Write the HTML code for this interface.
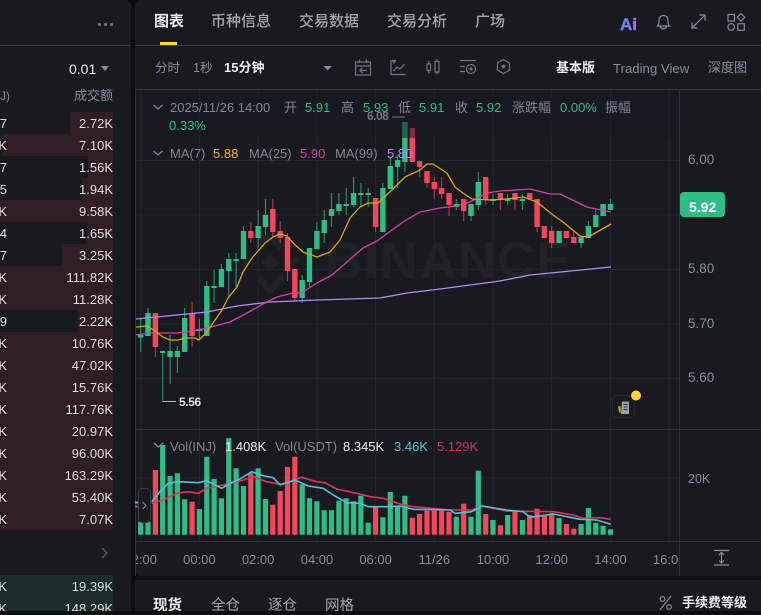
<!DOCTYPE html>
<html><head><meta charset="utf-8">
<style>
html,body{margin:0;padding:0;background:#0b0e11}
body{width:761px;height:611px;overflow:hidden;position:relative;font-family:"Liberation Sans","Noto Sans CJK SC",sans-serif}
.p{position:absolute;background:#181a20;overflow:hidden}
.t{position:absolute;white-space:nowrap;line-height:16px;height:16px}
.g{color:#2ebd85}.d{color:#848e9c}.w{color:#eaecef}
.tab{font-size:15px;color:#a3a8b0;top:13px;font-weight:500;line-height:18px;height:18px}
.l{font-size:13px;color:#7f8793;top:100px}
.m{font-size:13px;color:#7f8793;top:146px}
.v{font-size:13px;color:#7f8793;top:439px}
.ax{font-size:13.500px;color:#848e9c;left:688px}
.x{font-size:13px;color:#848e9c;top:552px;width:50px;text-align:center}
.r{position:absolute;left:0;width:113px;height:22px}
.n{position:absolute;right:18px;font-size:13px;line-height:22px;margin-top:1px;color:#dcdee1;white-space:nowrap}
.c{position:absolute;left:-10px;width:17px;text-align:right;font-size:13px;line-height:22px;margin-top:1px;color:#dcdee1}
</style></head><body>

<!-- left panel -->
<div class="p" style="left:0;top:0;width:131px;height:611px">
<div style="position:absolute;left:0;top:45px;width:131px;height:1px;background:#333b47"></div>
<div style="position:absolute;left:98px;top:23px;width:2.500px;height:2.500px;border-radius:50%;background:#6b7280;box-shadow:6px 0 #6b7280,12px 0 #6b7280"></div>
<span class="t w" style="left:69px;top:61px;font-size:14px">0.01</span>
<div style="position:absolute;left:101px;top:66px;border-left:4px solid transparent;border-right:4px solid transparent;border-top:5px solid #848e9c"></div>
<span class="t d" style="left:0;top:88px;font-size:12px">J)</span>
<span class="t d" style="left:74px;top:88px;font-size:13px">成交额</span>

<div class="r" style="top:112px;left:70px;width:43px;background:#2f1e26"></div>
<div class="r" style="top:134px;left:3px;width:110px;background:#2f1e26"></div>
<div class="r" style="top:156px;left:88px;width:25px;background:#2f1e26"></div>
<div class="r" style="top:178px;left:82px;width:31px;background:#2f1e26"></div>
<div class="r" style="top:200px;width:113px;background:#2f1e26"></div>
<div class="r" style="top:222px;left:87px;width:26px;background:#2f1e26"></div>
<div class="r" style="top:244px;left:62px;width:51px;background:#2f1e26"></div>
<div class="r" style="top:266px;height:44px;background:#2f1e26"></div>
<div class="r" style="top:310px;left:78px;width:35px;background:#2f1e26"></div>
<div class="r" style="top:332px;height:198px;background:#2f1e26"></div>
<div class="r" style="top:575px;height:36px;background:#1c2b2b"></div>

<span class="c" style="top:112px">7</span><span class="n" style="top:112px">2.72K</span>
<span class="c" style="top:134px">K</span><span class="n" style="top:134px">7.10K</span>
<span class="c" style="top:156px">7</span><span class="n" style="top:156px">1.56K</span>
<span class="c" style="top:178px">5</span><span class="n" style="top:178px">1.94K</span>
<span class="c" style="top:200px">K</span><span class="n" style="top:200px">9.58K</span>
<span class="c" style="top:222px">4</span><span class="n" style="top:222px">1.65K</span>
<span class="c" style="top:244px">7</span><span class="n" style="top:244px">3.25K</span>
<span class="c" style="top:266px">K</span><span class="n" style="top:266px">111.82K</span>
<span class="c" style="top:288px">K</span><span class="n" style="top:288px">11.28K</span>
<span class="c" style="top:310px">9</span><span class="n" style="top:310px">2.22K</span>
<span class="c" style="top:332px">K</span><span class="n" style="top:332px">10.76K</span>
<span class="c" style="top:354px">K</span><span class="n" style="top:354px">47.02K</span>
<span class="c" style="top:376px">K</span><span class="n" style="top:376px">15.76K</span>
<span class="c" style="top:398px">K</span><span class="n" style="top:398px">117.76K</span>
<span class="c" style="top:420px">K</span><span class="n" style="top:420px">20.97K</span>
<span class="c" style="top:442px">K</span><span class="n" style="top:442px">96.00K</span>
<span class="c" style="top:464px">K</span><span class="n" style="top:464px">163.29K</span>
<span class="c" style="top:486px">K</span><span class="n" style="top:486px">53.40K</span>
<span class="c" style="top:508px">K</span><span class="n" style="top:508px">7.07K</span>
<svg style="position:absolute;left:100px;top:546px" width="10" height="14" viewBox="0 0 10 14"><path d="M2 2l5 5-5 5" fill="none" stroke="#5e6673" stroke-width="1.200"/></svg>
<span class="c" style="top:575px">K</span><span class="n" style="top:575px">19.39K</span>
<span class="c" style="top:597px">K</span><span class="n" style="top:597px">148.29K</span>
</div>

<!-- chart panel -->
<div class="p" style="left:135px;top:0;width:626px;height:576px;border-bottom-left-radius:6px"></div>
<div class="p" style="left:135px;top:580px;width:626px;height:31px"></div>
<div style="position:absolute;left:127px;top:0;border-left:6px solid transparent;border-right:6px solid transparent;border-top:5px solid #0b0e11"></div>

<span class="t tab w" style="left:154px;color:#eaecef;font-weight:700">图表</span>
<span class="t tab" style="left:211px">币种信息</span>
<span class="t tab" style="left:299px">交易数据</span>
<span class="t tab" style="left:387px">交易分析</span>
<span class="t tab" style="left:475px">广场</span>
<div style="position:absolute;left:160px;top:42px;width:17px;height:3px;background:#fcd535"></div>

<svg style="position:absolute;left:0;top:0" width="761" height="611">
<defs><linearGradient id="ai" x1="0" x2="1" y1="0" y2="0"><stop offset="0" stop-color="#4f8fff"/><stop offset=".6" stop-color="#7d7cf8"/><stop offset="1" stop-color="#b96fe0"/></linearGradient></defs>
<path d="M135 45.500H761M135 89.500H761" stroke="#333b47" fill="none"/>
<text x="620" y="30" font-family="Liberation Sans" font-weight="700" font-size="17" fill="url(#ai)" stroke="url(#ai)" stroke-width=".4">Ai</text>
<g fill="none" stroke="#848e9c" stroke-width="1.200">
<path d="M658 26c1.500-1.500 1.500-3 1.500-6a4.500 4.500 0 0 1 9 0c0 3 0 4.500 1.500 6zM661 26.500c.5 3 5.500 3 6 0" transform="translate(-.5 0)"/>
<path d="M692 28l13-13M699.500 15h5.500v5.500M692 22.500V28h5.500"/>
<rect x="728" y="14.500" width="6.500" height="6.500"/><path d="M741 13.500l3.800 3.800-3.800 3.800-3.800-3.800z"/><circle cx="731.200" cy="27" r="3.300"/><rect x="737.800" y="23.800" width="6.500" height="6.500"/>
</g>
<g fill="none" stroke="#6f7682" stroke-width="1.200">
<rect x="355.500" y="62" width="15" height="13"/><path d="M355.500 66H370.500M359.500 59.500v3.500M366.500 59.500v3.500M367 70.500h-7M362.500 68l-2.700 2.500 2.700 2.500"/>
<path d="M391 60v14.500h14.500M393.500 71l3.500-4 3 2 4.500-5"/><path d="M392.500 60.500h3l-1.500 2.500z" fill="#6f7682"/>
<rect x="427" y="64" width="3.500" height="6.500"/><rect x="435" y="61.500" width="4" height="10.500"/><path d="M428.800 61v3M428.800 70.500v3M437 59v2.500M437 72v2.500"/>
<path d="M460 60.500h16M460 66.500h5M460 71.500h5"/><circle cx="471" cy="69" r="4.500"/><circle cx="471" cy="69" r="1" fill="#6f7682"/>
<path d="M503.500 59.500l6 3.500v7l-6 3.500-6-3.500v-7z"/><circle cx="503.500" cy="66.500" r="1.300" fill="#6f7682"/>
</g>
<path d="M323.500 66h8.500l-4.250 4.500z" fill="#848e9c"/>

<!-- grid -->
<g stroke="#21262d" fill="none">
<path d="M140.700 90V541M199.400 90V541M258.100 90V541M316.900 90V541M375.600 90V541M434.300 90V541M493 90V541M551.700 90V541M610.500 90V541M669.200 90V541"/>
<path d="M135 160.500H679M135 215H679M135 269.500H679M135 324H679M135 378.500H679M135 478H679"/>
</g>
<path d="M135 429.500H761M135 541.500H761M679.500 90V576M135.500 90V576" stroke="#2b3139" fill="none"/>

<!-- watermark -->
<g fill="none" stroke="#1f2227" stroke-width="7"><path d="M270 236l12 12M258 248l12-12M282 278l-12 12-12-12M244 263l4-4M296 263l-4-4"/></g>
<path d="M270 254l9 9-9 9-9-9z" fill="#1f2227"/>
<text x="325" y="278" font-family="Liberation Sans" font-weight="700" font-size="52" letter-spacing="1.500" fill="#1f2227">BINANCE</text>

<!-- wicks -->
<path stroke="#2ebd85" stroke-opacity=".75" stroke-width="1.100" fill="none" d="M140.700 319V352M148 308V336M162.700 351V402M170.100 335V384M177.400 346V373M184.700 308V352M199.400 319V340M206.800 281V336M214.100 270V303M221.400 264V287M228.800 253V297M236.100 253V287M243.500 226V259M258.100 210V248M265.500 199V235M302.200 275V303M309.500 248V287M316.900 222V249M324.200 210V243M331.500 193V227M338.900 193V215M346.200 188V215M353.600 177V207M360.900 183V207M368.200 188V207M382.900 183V232M390.300 158V189M397.600 155V188M404.900 122V172M456.300 199V210M471 204V221M478.300 172V210M493 194V205M507.700 194V205M522.400 194V210M559.100 231V243M581.100 237V248M588.400 221V238M595.800 210V227M603.100 204V216M610.500 199V210"/>
<path stroke="#f6465d" stroke-opacity=".7" stroke-width="1.100" fill="none" d="M155.400 313V357M192.100 302V347M250.800 222V243M272.800 199V237M280.200 221V243M287.500 233V281M294.800 269V302M375.600 198V232M412.300 128V162M419.600 161V177M427 171V188M434.300 177V199M441.600 177V199M449 193V216M463.700 199V221M485.700 177V205M500.400 193V210M515 193V210M529.700 193V199M537.100 199V232M544.400 226V238M551.700 226V248M566.400 231V238M573.800 231V243"/>
<!-- bodies -->
<path stroke="#2ebd85" stroke-width="5.400" fill="none" d="M140.700 335V337.500M148 313V336M162.700 351V353M170.100 351V357M177.400 351V357M184.700 318V352M199.400 329V331M206.800 286V336M214.100 286V288M221.400 269V287M228.800 259V271M236.100 259V261M243.500 231V259M258.100 226V238M265.500 215V227M302.200 280V298M309.500 248V282M316.900 231V249M324.200 220V233M331.500 209V216M338.900 204V211M346.200 204V206M353.600 193V205M360.900 193V195M368.200 193V195M382.900 188V232M390.300 166V189M397.600 160V167M404.900 122V162M456.300 204V207M471 204V216M478.300 182V205M493 199V201M507.700 199V201M522.400 199V201M559.100 231V243M581.100 237V243M588.400 226V238M595.800 215V227M603.100 204V216M610.500 204V210"/>
<path stroke="#f6465d" stroke-width="5.400" fill="none" d="M155.400 313V347M192.100 313V336M250.800 231V238M272.800 209V232M280.200 231V238M287.500 237V271M294.800 269V298M375.600 198V227M412.300 128V162M419.600 161V167M427 171V183M434.300 182V189M441.600 188V194M449 193V205M463.700 199V211M485.700 177V200M500.400 193V200M515 193V200M529.700 193V199M537.100 199V227M544.400 226V238M551.700 231V243M566.400 231V238M573.800 237V243"/>

<!-- MA lines -->
<polyline fill="none" stroke="#b58cf0" stroke-width="1.300" points="136,319 207,312 237,306 270,302 317,300 380,298 407,293 440,289 500,281 530,275 611,267"/>
<polyline fill="none" stroke="#d83fa4" stroke-width="1.300" stroke-linejoin="round" points="136,335 150,333 177,333 187,332 207,328 230,322 247,313 263,304 277,297 293,293 303,292 317,283 332,275 347,262 363,248 377,241 403,222 420,212 440,208 457,206 470,202 487,193 500,191 530,189 550,194 560,194 587,207 611,212"/>
<polyline fill="none" stroke="#dba50c" stroke-width="1.300" stroke-linejoin="round" points="136,327 147,326 155,331 163,337 170,340 178,340 185,338 195,338 199,340 207,332 213,323 222,310 228,298 237,287 243,272 252,258 265,243 273,237 280,234 287,236 293,243 303,252 317,257 330,252 340,240 350,218 360,207 368,203 378,203 392,190 405,177 420,170 427,164 433,164 447,173 455,187 463,193 472,199 490,200 507,199 523,197 537,202 553,215 563,222 580,236 588,237 597,232 611,224"/>

<!-- legend dim overlay -->
<rect x="150" y="97" width="528" height="41" fill="#181a20" fill-opacity=".55"/>

<!-- volume -->
<path stroke="#2ebd85" stroke-width="5.200" fill="none" d="M140.700 521.700V534.700M148 521.700V534.700M162.700 445V534.700M170.100 476V534.700M177.400 473.300V534.700M184.700 499.300V534.700M199.400 509V534.700M206.800 456.700V534.700M214.100 479V534.700M221.400 498.300V534.700M228.800 438.300V534.700M236.100 468.300V534.700M243.500 486V534.700M258.100 468.300V534.700M265.500 499V534.700M302.200 484.300V534.700M309.500 498.300V534.700M316.900 501.300V534.700M324.200 510.300V534.700M331.500 510.300V534.700M338.900 500.700V534.700M346.200 498.300V534.700M353.600 501.300V534.700M360.900 495.700V534.700M368.200 522.700V534.700M382.900 517.300V534.700M390.300 492V534.700M397.600 506.700V534.700M404.900 495.700V534.700M456.300 516.700V534.700M471 516.700V534.700M478.300 470.700V534.700M493 520V534.700M507.700 515V534.700M522.400 520V534.700M559.100 518V534.700M581.100 524V534.700M588.400 508V534.700M595.800 522.700V534.700M603.100 525.700V534.700M610.500 529.300V534.700"/>
<path stroke="#f6465d" stroke-width="5.200" fill="none" d="M155.400 470V534.700M192.100 501.700V534.700M250.800 473.300V534.700M272.800 504.700V534.700M280.200 491V534.700M287.500 467V534.700M294.800 456.700V534.700M375.600 507.300V534.700M412.300 517.700V534.700M419.600 514V534.700M427 510.700V534.700M434.300 510.700V534.700M441.600 510.700V534.700M449 511.700V534.700M463.700 503.700V534.700M485.700 514V534.700M500.400 525.300V534.700M515 511V534.700M529.700 515V534.700M537.100 508.700V534.700M544.400 515V534.700M551.700 513.300V534.700M566.400 524V534.700M573.800 528.700V534.700"/>
<polyline fill="none" stroke="#e5305f" stroke-width="1.600" stroke-linejoin="round" points="151.700,503.300 163.300,500 176.700,493.300 188.300,491.700 198.300,493.300 206.700,488.300 226.700,484.300 243.300,480 253.300,476.700 266.700,481.700 280,484.300 290,481.700 301.700,477.300 316.700,481.700 325,482.700 336.700,489 356.700,493.300 370,496.700 383.300,498.300 400,504 413.300,506.700 450,510 455,510 471.700,510 481.700,506 506.700,511 553.300,511.700 573.300,515 583.300,518.300 600,517.700 610.700,519.300"/>
<polyline fill="none" stroke="#4fc3d9" stroke-width="1.600" stroke-linejoin="round" points="151.700,501.700 160,491.700 168.300,483.300 178.300,481.700 198.300,482.700 206.700,480.700 215,485 221.700,488.300 230,483.300 240,479 251.700,471.700 263.300,475.700 273.300,477.700 280,485 295,480 308.300,486 323.300,488.300 333.300,495 346.700,502.700 360,503.300 368.300,506.700 386.700,506.700 400,506 413.300,509.300 450,510 455,513.300 471.700,511.700 481.700,506 506.700,510 523.300,511.700 530,517.300 553.300,514 580,519.300 596.700,520 610.700,524.300"/>

<!-- chevrons -->
<g fill="none" stroke="#848e9c" stroke-width="1.200">
<path d="M153.500 105l4.500 4 4.500-4M153.500 151l4.500 4 4.500-4M154 443l4.500 4 4.500-4"/>
</g>
<!-- low/high markers -->
<path d="M163 401.500H176" stroke="#b7bdc6" fill="none"/>
<path d="M392 117H405" stroke="#7a7f87" fill="none"/>

<!-- toggle -->
<rect x="138.500" y="488.500" width="12" height="34" rx="4" fill="#181a20" stroke="#333b47"/>
<path d="M142.500 502l3.500 3.500-3.500 3.500" fill="none" stroke="#848e9c" stroke-width="1.100"/>
<path d="M135 502.500h3" stroke="#4fc3d9" stroke-width="2"/><path d="M135 506.500h3" stroke="#e5305f" stroke-width="2"/>

<!-- news icon -->
<rect x="612.500" y="395.500" width="22" height="22" rx="5" fill="#181a20" stroke="#23272e"/>
<path d="M622 401.500h7v12.500h-8z" fill="#9ba1a9"/><path d="M618 406.500l2.500-.5.500 6.500h-2z" fill="#c99a12"/><path d="M623.500 404.500h4M623.500 407h4M623.500 409.500h4" stroke="#2b3139"/>
<circle cx="636" cy="395.500" r="5" fill="#fcd535"/>

<!-- axis icon -->
<g fill="none" stroke="#848e9c" stroke-width="1.200"><path d="M714 550.500H729M714 565H729M721.500 552.500V563M719 555l2.500-2.500 2.500 2.500M719 560.500l2.500 2.500 2.500-2.500"/></g>
<path d="M660 610l11-14" stroke="#848e9c" stroke-width="1.200" fill="none"/>
<circle cx="662.500" cy="599" r="2.300" fill="none" stroke="#848e9c" stroke-width="1.200"/><circle cx="669" cy="607" r="2.300" fill="none" stroke="#848e9c" stroke-width="1.200"/>
</svg>

<!-- toolbar text -->
<span class="t d" style="left:155px;top:60px;font-size:12.500px">分时</span>
<span class="t d" style="left:193px;top:60px;font-size:12.500px">1秒</span>
<span class="t w" style="left:224px;top:60px;font-size:13px;font-weight:700">15分钟</span>
<span class="t w" style="left:556px;top:60px;font-size:13px;font-weight:700">基本版</span>
<span class="t d" style="left:613px;top:61px;font-size:13.200px">Trading View</span>
<span class="t d" style="left:708px;top:60px;font-size:13px">深度图</span>

<!-- legend -->
<span class="t l" style="left:170px">2025/11/26 14:00</span>
<span class="t l" style="left:284px">开</span><span class="t l g" style="left:305px;color:#2ebd85">5.91</span>
<span class="t l" style="left:341px">高</span><span class="t l" style="left:363px;color:#2ebd85">5.93</span>
<span class="t l" style="left:398px">低</span><span class="t l" style="left:419px;color:#2ebd85">5.91</span>
<span class="t l" style="left:455px">收</span><span class="t l" style="left:476px;color:#2ebd85">5.92</span>
<span class="t l" style="left:512px">涨跌幅</span><span class="t l" style="left:560px;color:#2ebd85">0.00%</span>
<span class="t l" style="left:605px">振幅</span>
<span class="t l" style="left:169px;top:118px;color:#2ebd85">0.33%</span>
<span class="t" style="left:367px;top:108px;font-size:12px;font-weight:700;letter-spacing:-.5px;color:#70757d">6.08</span>

<span class="t m" style="left:170px">MA(7)</span><span class="t m" style="left:213px;color:#f0b90b">5.88</span>
<span class="t m" style="left:249px">MA(25)</span><span class="t m" style="left:300px;color:#d83fa4">5.90</span>
<span class="t m" style="left:335px">MA(99)</span><span class="t m" style="left:387px;color:#b58cf0">5.80</span>

<!-- axis -->
<span class="t ax" style="top:152px">6.00</span>
<span class="t ax" style="top:261px">5.80</span>
<span class="t ax" style="top:316px">5.70</span>
<span class="t ax" style="top:370px">5.60</span>
<span class="t ax" style="top:471px;font-size:12.500px">20K</span>
<div style="position:absolute;left:680px;top:192px;width:45px;height:25px;background:#2ebd85;border-radius:4px"></div>
<span class="t" style="left:689px;top:199px;font-size:14px;font-weight:700;color:#fff">5.92</span>

<span class="t" style="left:179px;top:394px;font-size:12px;font-weight:700;letter-spacing:-.4px;color:#dfe1e4">5.56</span>

<!-- volume legend -->
<span class="t v" style="left:170px">Vol(INJ)</span><span class="t v" style="left:225px;color:#eaecef">1.408K</span>
<span class="t v" style="left:275px">Vol(USDT)</span><span class="t v" style="left:343px;color:#eaecef">8.345K</span>
<span class="t v" style="left:394px;color:#4fc3d9">3.46K</span><span class="t v" style="left:437px;color:#d62f58">5.129K</span>

<!-- x axis -->
<div style="position:absolute;left:136px;top:545px;width:543px;height:30px;overflow:hidden">
<span class="t x" style="left:-20.300px;top:7px">12:00</span>
<span class="t x" style="left:38.400px;top:7px">00:00</span>
<span class="t x" style="left:97.100px;top:7px">02:00</span>
<span class="t x" style="left:156px;top:7px">04:00</span>
<span class="t x" style="left:214.600px;top:7px">06:00</span>
<span class="t x" style="left:273.300px;top:7px">11/26</span>
<span class="t x" style="left:332px;top:7px">10:00</span>
<span class="t x" style="left:390.700px;top:7px">12:00</span>
<span class="t x" style="left:449.500px;top:7px">14:00</span>
<span class="t x" style="left:508.200px;top:7px">16:00</span>
</div>

<!-- bottom tabs -->
<span class="t w" style="left:153px;top:597px;font-size:14.500px;font-weight:700;line-height:18px;height:18px">现货</span>
<span class="t" style="left:211px;top:597px;font-size:14.500px;color:#a3a8b0;line-height:18px;height:18px">全仓</span>
<span class="t" style="left:268px;top:597px;font-size:14.500px;color:#a3a8b0;line-height:18px;height:18px">逐仓</span>
<span class="t" style="left:325px;top:597px;font-size:14.500px;color:#a3a8b0;line-height:18px;height:18px">网格</span>
<span class="t w" style="left:682px;top:595px;font-size:13px;font-weight:700">手续费等级</span>
</body></html>
